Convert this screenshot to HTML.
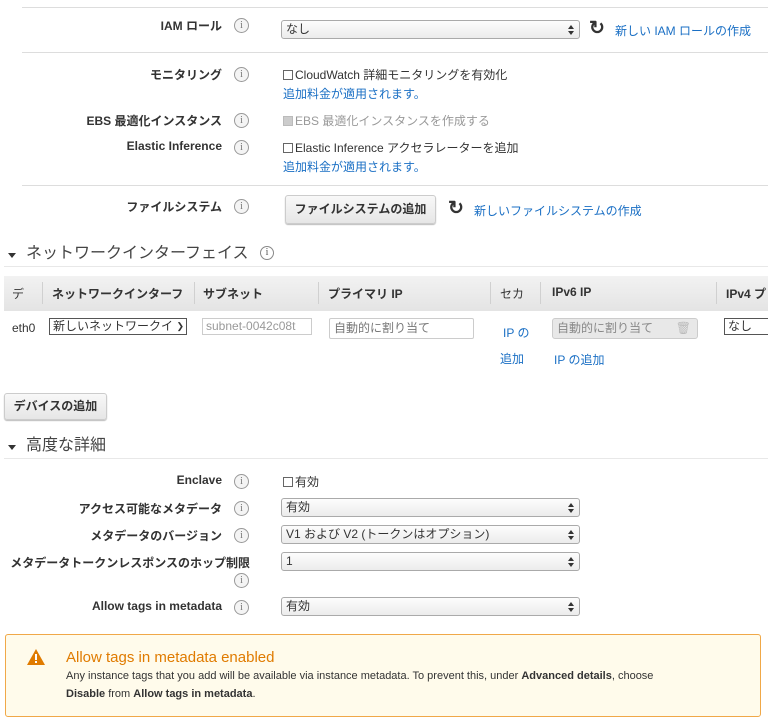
<!DOCTYPE html>
<html><head><meta charset="utf-8"><style>
*{margin:0;padding:0;box-sizing:border-box}
body{width:768px;height:723px;overflow:hidden;background:#fff;font-family:"Liberation Sans","Noto Sans CJK JP",sans-serif;font-size:12px;color:#333;position:relative}
.a{position:absolute;white-space:nowrap}
.lbl{position:absolute;right:546px;font-weight:bold;color:#333;white-space:nowrap;font-size:12px}
.info{position:absolute;width:15px;height:15px;border:1px solid #999;border-radius:50%;font-size:10px;color:#777;text-align:center;line-height:13px;font-family:"Liberation Serif",serif;background:#f4f4f4}
.hr{position:absolute;height:1px;background:#ddd}
.sel{position:absolute;height:19px;border:1px solid #aaa;border-radius:3px;background:linear-gradient(#fdfdfd,#ececec);padding-left:4px;line-height:17px;color:#333}
.sel:after{content:"";position:absolute;right:5px;top:4px;width:0;height:0;border-left:3px solid transparent;border-right:3px solid transparent;border-bottom:4px solid #333}
.sel:before{content:"";position:absolute;right:5px;top:10px;width:0;height:0;border-left:3px solid transparent;border-right:3px solid transparent;border-top:4px solid #333}
.link{color:#1a6fc4}
.cb{display:inline-block;width:10px;height:10px;border:1px solid #666;vertical-align:-1px;margin-right:2px;background:#fff}
.btn{position:absolute;border:1px solid #ccc;border-radius:3px;background:linear-gradient(#f8f8f8,#e6e6e6);font-weight:bold;text-align:center;color:#333;box-shadow:0 1px 1px #bbb}
.ref{position:absolute;font-size:19px;font-weight:bold;color:#333;line-height:19px}
.th{position:absolute;top:285px;font-weight:bold;color:#333}
.sep{position:absolute;top:282px;width:1px;height:22px;background:#d0d0d0}
.tri{position:absolute;width:0;height:0;border-left:4px solid transparent;border-right:4px solid transparent;border-top:5px solid #333}
</style></head><body>
<div class="hr" style="left:22px;top:7px;width:746px"></div>

<div class="lbl" style="top:17px">IAM ロール</div>
<div class="info" style="left:234px;top:18px">i</div>
<div class="sel" style="left:281px;top:20px;width:299px">なし</div>
<div class="ref" style="left:589px;top:19px">↻</div>
<div class="a link" style="left:615px;top:22px">新しい IAM ロールの作成</div>
<div class="hr" style="left:22px;top:52px;width:746px"></div>

<div class="lbl" style="top:66px">モニタリング</div>
<div class="info" style="left:234px;top:67px">i</div>
<div class="a" style="left:283px;top:66px"><span class="cb"></span>CloudWatch 詳細モニタリングを有効化</div>
<div class="a link" style="left:283px;top:85px">追加料金が適用されます。</div>

<div class="lbl" style="top:112px">EBS 最適化インスタンス</div>
<div class="info" style="left:234px;top:113px">i</div>
<div class="a" style="left:283px;top:112px;color:#999"><span class="cb" style="background:#ccc;border-color:#bbb"></span>EBS 最適化インスタンスを作成する</div>

<div class="lbl" style="top:139px">Elastic Inference</div>
<div class="info" style="left:234px;top:140px">i</div>
<div class="a" style="left:283px;top:139px"><span class="cb"></span>Elastic Inference アクセラレーターを追加</div>
<div class="a link" style="left:283px;top:158px">追加料金が適用されます。</div>
<div class="hr" style="left:22px;top:185px;width:746px"></div>

<div class="lbl" style="top:198px">ファイルシステム</div>
<div class="info" style="left:234px;top:199px">i</div>
<div class="btn" style="left:285px;top:195px;width:151px;height:29px;line-height:27px">ファイルシステムの追加</div>
<div class="ref" style="left:448px;top:199px">↻</div>
<div class="a link" style="left:474px;top:202px">新しいファイルシステムの作成</div>

<div class="tri" style="left:8px;top:253px"></div>
<div class="a" style="left:26px;top:243px;font-size:16px;line-height:22px;color:#444">ネットワークインターフェイス</div>
<div class="info" style="left:260px;top:246px;background:none;color:#555;border:1px solid #888;width:14px;height:14px;line-height:12px">i</div>
<div class="hr" style="left:4px;top:266px;width:764px;background:#e8e8e8"></div>

<div style="position:absolute;left:4px;top:276px;width:764px;height:35px;background:linear-gradient(#f2f2f2,#e4e4e4)"></div>
<div class="th" style="left:12px;font-weight:normal">デ</div>
<div class="sep" style="left:42px"></div>
<div class="th" style="left:52px">ネットワークインターフ</div>
<div class="sep" style="left:194px"></div>
<div class="th" style="left:203px">サブネット</div>
<div class="sep" style="left:318px"></div>
<div class="th" style="left:328px">プライマリ IP</div>
<div class="sep" style="left:490px"></div>
<div class="th" style="left:500px;font-weight:normal">セカ</div>
<div class="sep" style="left:540px"></div>
<div class="th" style="left:552px">IPv6 IP</div>
<div class="sep" style="left:716px"></div>
<div class="th" style="left:726px">IPv4 プ</div>

<div class="a" style="left:12px;top:321px">eth0</div>
<div class="a" style="left:49px;top:318px;width:138px;height:17px;border:1px solid #555;padding-left:3px;line-height:15px;overflow:hidden">新しいネットワークイ<span style="position:absolute;right:2px;top:0;background:#fff;font-size:9px">❯</span></div>
<div class="a" style="left:202px;top:318px;width:110px;height:17px;border:1px solid #ccc;padding-left:3px;line-height:15px;color:#999;overflow:hidden">subnet-0042c08t</div>
<div class="a" style="left:329px;top:318px;width:145px;height:21px;border:1px solid #ccc;border-radius:2px;padding-left:4px;line-height:19px;color:#777">自動的に割り当て</div>
<div class="a link" style="left:503px;top:324px">IP の</div>
<div class="a link" style="left:500px;top:350px">追加</div>
<div class="a" style="left:552px;top:318px;width:146px;height:21px;border:1px solid #ccc;border-radius:3px;background:#e8e8e8;padding-left:4px;line-height:19px;color:#888">自動的に割り当て<span style="position:absolute;right:6px;color:#bbb">🗑</span></div>
<div class="a link" style="left:554px;top:351px">IP の追加</div>
<div class="a" style="left:724px;top:318px;width:50px;height:17px;border:1px solid #555;padding-left:3px;line-height:15px">なし</div>

<div class="btn" style="left:4px;top:393px;width:103px;height:27px;line-height:25px">デバイスの追加</div>

<div class="tri" style="left:8px;top:445px"></div>
<div class="a" style="left:26px;top:435px;font-size:16px;line-height:22px;color:#444">高度な詳細</div>
<div class="hr" style="left:4px;top:458px;width:764px;background:#e8e8e8"></div>

<div class="lbl" style="top:473px">Enclave</div>
<div class="info" style="left:234px;top:474px">i</div>
<div class="a" style="left:283px;top:473px"><span class="cb"></span>有効</div>

<div class="lbl" style="top:500px">アクセス可能なメタデータ</div>
<div class="info" style="left:234px;top:501px">i</div>
<div class="sel" style="left:281px;top:498px;width:299px">有効</div>

<div class="lbl" style="top:527px">メタデータのバージョン</div>
<div class="info" style="left:234px;top:528px">i</div>
<div class="sel" style="left:281px;top:525px;width:299px">V1 および V2 (トークンはオプション)</div>

<div class="lbl" style="top:554px;right:518px">メタデータトークンレスポンスのホップ制限</div>
<div class="info" style="left:234px;top:573px">i</div>
<div class="sel" style="left:281px;top:552px;width:299px">1</div>

<div class="lbl" style="top:599px">Allow tags in metadata</div>
<div class="info" style="left:234px;top:600px">i</div>
<div class="sel" style="left:281px;top:597px;width:299px">有効</div>

<div style="position:absolute;left:5px;top:634px;width:756px;height:83px;border:1px solid #f0a848;border-radius:3px;background:#fffbeb"></div>
<svg class="a" style="left:27px;top:649px" width="18" height="16" viewBox="0 0 18 16"><path d="M9 0 L18 16 L0 16 Z" fill="#e07b00"/><rect x="8" y="5" width="2" height="6" fill="#fff"/><rect x="8" y="12" width="2" height="2" fill="#fff"/></svg>
<div class="a" style="left:66px;top:649px;font-size:15px;color:#e07b00">Allow tags in metadata enabled</div>
<div class="a" style="left:66px;top:670px;font-size:11px;color:#333">Any instance tags that you add will be available via instance metadata. To prevent this, under <b>Advanced details</b>, choose</div>
<div class="a" style="left:66px;top:688px;font-size:11px;color:#333"><b>Disable</b> from <b>Allow tags in metadata</b>.</div>
</body></html>
